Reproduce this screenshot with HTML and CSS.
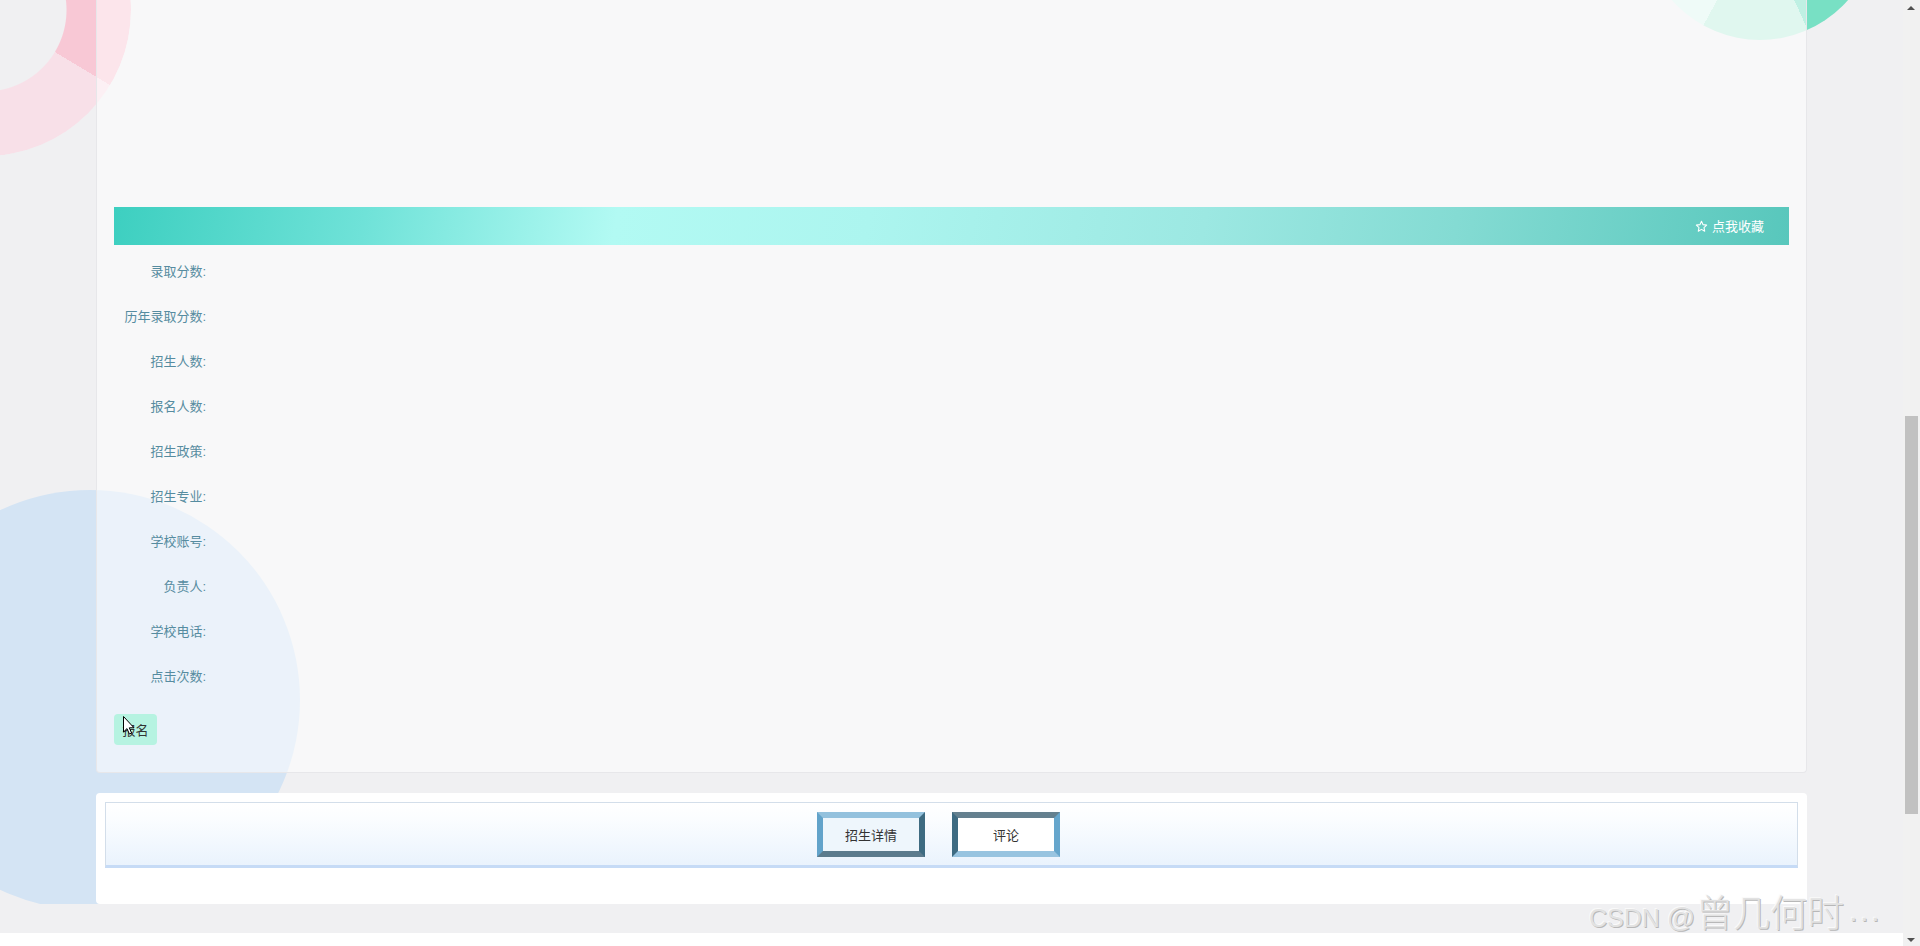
FILE: index.html
```html
<!DOCTYPE html>
<html lang="zh-CN">
<head>
<meta charset="utf-8">
<title>招生详情</title>
<link rel="stylesheet" href="styles.css">
</head>
<body>
<div class="viewport">
  <div class="stage">
    <div class="deco">
      <div class="circle pink"></div>
      <div class="circle teal"></div>
      <div class="circle blue"></div>
    </div>
    <div class="main">
      <section class="detail">
        <div class="top-space"></div>
        <div class="bar">
          <span class="fav">
            <svg class="star" viewBox="0 0 24 24" width="13" height="13"><path d="M12 2.5l2.9 6.1 6.6.8-4.9 4.6 1.3 6.6L12 17.3l-5.9 3.3 1.3-6.6-4.9-4.6 6.6-.8z" fill="none" stroke="#fff" stroke-width="2" stroke-linejoin="round"/></svg>
            点我收藏
          </span>
        </div>
        <div class="rows">
          <div class="row"><span class="label">录取分数:</span><span class="value"></span></div>
          <div class="row"><span class="label">历年录取分数:</span><span class="value"></span></div>
          <div class="row"><span class="label">招生人数:</span><span class="value"></span></div>
          <div class="row"><span class="label">报名人数:</span><span class="value"></span></div>
          <div class="row"><span class="label">招生政策:</span><span class="value"></span></div>
          <div class="row"><span class="label">招生专业:</span><span class="value"></span></div>
          <div class="row"><span class="label">学校账号:</span><span class="value"></span></div>
          <div class="row"><span class="label">负责人:</span><span class="value"></span></div>
          <div class="row"><span class="label">学校电话:</span><span class="value"></span></div>
          <div class="row"><span class="label">点击次数:</span><span class="value"></span></div>
        </div>
        <div class="actions">
          <button class="signup">报名</button>
          <svg class="cursor" viewBox="0 0 12 19" width="12" height="19"><path d="M0.5 0.5 L0.5 16 L4 12.6 L6.4 18 L8.6 17 L6.3 11.8 L11 11.8 Z" fill="#fff" stroke="#000" stroke-width="1" stroke-linejoin="miter"/></svg>
        </div>
      </section>
      <section class="tabs-card">
        <div class="tabs">
          <button class="tab tab-out">招生详情</button>
          <button class="tab tab-in">评论</button>
        </div>
      </section>
    </div>
  </div>
  <div class="foot-gray"></div>
  <div class="foot-white"></div>
  <div class="watermark"><span class="wm-latin">CSDN</span><span class="wm-at">@</span><span class="wm-cjk">曾几何时</span><span class="wm-dots">···</span></div>
  <div class="scrollbar">
    <span class="arrow up"></span>
    <span class="thumb"></span>
    <span class="arrow down"></span>
  </div>
</div>
</body>
</html>
```
FILE: styles.css
```css
* { box-sizing: border-box; }
html, body { margin: 0; padding: 0; }
body {
  width: 1920px;
  height: 946px;
  overflow: hidden;
  background: #f0f0f2;
  font-family: "Liberation Sans", "Noto Sans CJK SC", sans-serif;
  font-size: 13px;
  color: #333;
}
.viewport {
  position: relative;
  width: 1920px;
  height: 946px;
  display: flex;
  flex-direction: column;
}
.stage {
  position: relative;
  height: 904px;
  flex: none;
  width: 1903px;
  overflow: hidden;
}
.deco {
  position: absolute;
  inset: 0;
  z-index: 0;
}
.circle {
  position: absolute;
  border-radius: 50%;
}
.pink {
  left: -161px;
  top: -136px;
  width: 292px;
  height: 292px;
  background: conic-gradient(#f8c8d5 0deg 121deg, #f8e0e8 121deg 360deg);
  -webkit-mask: radial-gradient(circle, transparent 0 81px, #000 82px);
  mask: radial-gradient(circle, transparent 0 81px, #000 82px);
}
.teal {
  left: 1643px;
  top: -194px;
  width: 234px;
  height: 234px;
  background: conic-gradient(#78e0c4 0deg 156deg, #bdeedd 156deg 209deg, #ddf7f0 209deg 360deg);
}
.blue {
  left: -120px;
  top: 490px;
  width: 420px;
  height: 420px;
  background: #d4e4f4;
}
.main {
  position: relative;
  z-index: 1;
  margin-left: 96px;
  width: 1711px;
  display: flex;
  flex-direction: column;
  gap: 20px;
}
.detail {
  height: 773px;
  flex: none;
  background: rgba(255, 255, 255, 0.53);
  border: 1px solid #e7e7ea;
  border-top: none;
  border-radius: 0 0 4px 4px;
  padding: 0 17px;
  display: flex;
  flex-direction: column;
}
.top-space { height: 207px; flex: none; }
.bar {
  height: 38px;
  flex: none;
  background: linear-gradient(100deg, #3dcfc0 0%, #6fe2d8 15%, #b2faf3 30%, #acf5ef 45%, #9ce8e2 65%, #84dbd3 80%, #58c7bc 100%);
  display: flex;
  align-items: center;
  justify-content: flex-end;
  padding-right: 25px;
}
.fav {
  color: #fff;
  font-size: 13px;
  display: flex;
  align-items: center;
  gap: 4px;
  line-height: 1;
}
.star { display: block; }
.rows {
  padding-top: 4px;
  display: flex;
  flex-direction: column;
}
.row {
  height: 45px;
  display: flex;
  align-items: center;
}
.label {
  width: 92px;
  text-align: right;
  color: #568ca0;
  font-size: 13px;
  line-height: 45px;
  white-space: nowrap;
}
.actions {
  position: relative;
  margin-top: 15px;
  display: flex;
}
.signup {
  width: 43px;
  height: 31px;
  border: none;
  border-radius: 4px;
  background: #b6f3e1;
  color: #333;
  font-family: "Liberation Sans", "Noto Sans CJK SC", sans-serif;
  font-size: 13px;
  padding: 0;
}
.cursor {
  position: absolute;
  left: 9px;
  top: 2px;
}
.tabs-card {
  height: 111px;
  flex: none;
  background: #fff;
  border-radius: 4px;
  padding: 9px 9px 36px;
}
.tabs {
  height: 66px;
  border: 1px solid #d3deea;
  border-bottom: 3px solid #c6dbf6;
  background: linear-gradient(to bottom, #ffffff 0%, #fbfdff 25%, #eaf3fd 100%);
  display: flex;
  justify-content: center;
  align-items: flex-start;
  gap: 27px;
  padding: 9px 26px 0 0;
}
.tab {
  width: 108px;
  height: 45px;
  border-style: solid;
  border-width: 6px;
  font-family: "Liberation Sans", "Noto Sans CJK SC", sans-serif;
  font-size: 13px;
  color: #333;
  padding: 0;
}
.tab-out {
  background: #eef6fc;
  border-color: #93c1dd #3e6b81 #5c7b8d #62a3ca;
}
.tab-in {
  background: #fff;
  border-color: #64808f #66a6cc #98c4e0 #3e6b82;
}
.foot-gray {
  height: 29px;
  flex: none;
  width: 1903px;
  background: #f0f0f2;
}
.foot-white {
  height: 13px;
  flex: none;
  width: 1903px;
  background: #fff;
}
.watermark {
  position: absolute;
  left: 1589px;
  top: 887px;
  height: 48px;
  display: flex;
  align-items: baseline;
  color: #e2e2e2;
  text-shadow: 1px 1px 0 #b8b8b8, -1px -1px 0 #fafafa;
  white-space: nowrap;
  z-index: 5;
  line-height: 48px;
}
.wm-latin {
  font-family: "Liberation Sans", sans-serif;
  font-size: 25px;
  margin-right: 7px;
}
.wm-at {
  font-family: "Liberation Sans", sans-serif;
  font-size: 28px;
  margin-right: 1px;
}
.wm-cjk {
  font-family: "Noto Sans CJK SC", sans-serif;
  font-size: 37px;
  font-weight: 300;
}
.wm-dots {
  font-family: "Liberation Sans", sans-serif;
  font-size: 30px;
  letter-spacing: 1px;
  margin-left: 4px;
}
.scrollbar {
  position: absolute;
  right: 0;
  top: 0;
  width: 17px;
  height: 946px;
  background: #f1f1f1;
  z-index: 4;
}
.thumb {
  position: absolute;
  left: 2px;
  top: 416px;
  width: 13px;
  height: 398px;
  background: #c1c1c1;
}
.arrow {
  position: absolute;
  left: 4px;
  width: 0;
  height: 0;
  border-left: 4px solid transparent;
  border-right: 4px solid transparent;
}
.arrow.up {
  top: 6px;
  border-bottom: 4px solid #505050;
}
.arrow.down {
  bottom: 4px;
  border-top: 4px solid #505050;
}
```
